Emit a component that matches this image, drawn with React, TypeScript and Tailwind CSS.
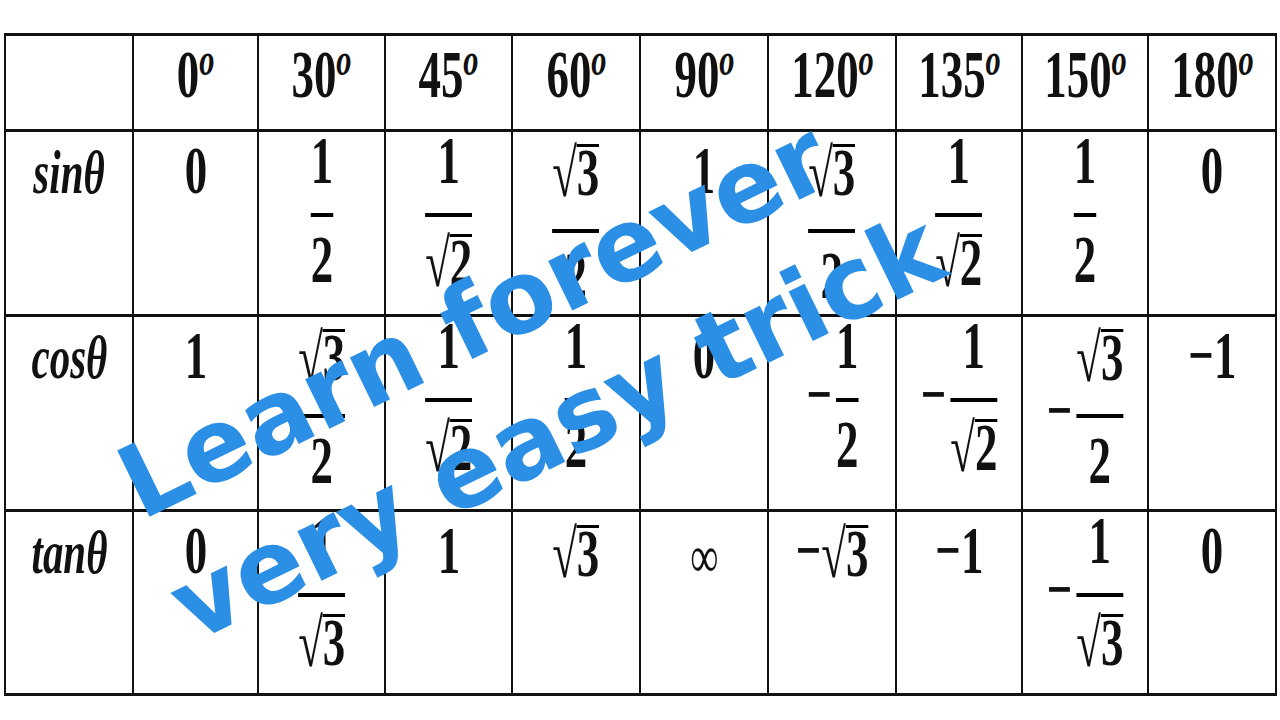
import type { ReactNode } from "react";

const serif = "font-['Liberation_Serif','Times_New_Roman',serif]";

function Rad({ v }: { v: string }) {
  return (
    <span className="flex items-start">
      <span className="relative top-[4px] leading-[50px]">√</span>
      <span className="border-t-[3px] border-black leading-[50px]">{v}</span>
    </span>
  );
}

function Val({ children }: { children: ReactNode }) {
  return <div className="mt-[13px] flex items-start leading-[50px]">{children}</div>;
}

function Minus({ rad }: { rad?: boolean }) {
  return <span className={`mr-[6px] leading-[50px] ${rad ? "mt-[68px]" : "mt-[52px]"}`}>−</span>;
}

interface FracProps {
  n: string;
  d: string;
  nRad?: boolean;
  dRad?: boolean;
  neg?: boolean;
}

function Frac({ n, d, nRad, dRad, neg }: FracProps) {
  return (
    <div className="flex items-start">
      {neg && <Minus rad={nRad} />}
      <div className="flex flex-col items-center pt-[3px]">
        {nRad ? (
          <div className="mb-[4px] mt-[9px]">
            <Rad v={n} />
          </div>
        ) : (
          <span className="block leading-[50px]">{n}</span>
        )}
        <div className="mt-[28px] h-[4px] self-stretch bg-black" />
        <div className="mt-[17px]">
          {dRad ? <Rad v={d} /> : <span className="block leading-[50px]">{d}</span>}
        </div>
      </div>
    </div>
  );
}

function Deg({ v }: { v: string }) {
  return (
    <div className="mt-[13px] flex items-start">
      <span className="leading-[50px]">{v}</span>
      <span className="text-[46px] italic leading-[22px]">o</span>
    </div>
  );
}

function Label({ t }: { t: string }) {
  return <div className="mt-[15px] text-[62px] italic leading-[50px]">{t}θ</div>;
}

function Cell({ children }: { children?: ReactNode }) {
  return (
    <div className="flex justify-center bg-white">
      <div className="flex scale-x-[0.66] items-start">{children}</div>
    </div>
  );
}

const angles = ["0", "30", "45", "60", "90", "120", "135", "150", "180"];

export default function App() {
  return (
    <div className="relative h-[720px] w-[1280px] overflow-hidden bg-white pl-[4px] pt-[33px]">
      <div
        className={`grid w-fit grid-cols-[126px_123px_125px_125px_126px_126px_126px_124px_124px_126px] grid-rows-[93px_182px_192px_181px] gap-x-[2px] gap-y-[3px] bg-[#111] px-[2px] py-[3px] text-[68px] font-bold text-[#111] ${serif}`}
      >
        <Cell />
        {angles.map((a) => (
          <Cell key={a}>
            <Deg v={a} />
          </Cell>
        ))}

        <Cell><Label t="sin" /></Cell>
        <Cell><Val>0</Val></Cell>
        <Cell><Frac n="1" d="2" /></Cell>
        <Cell><Frac n="1" d="2" dRad /></Cell>
        <Cell><Frac n="3" d="2" nRad /></Cell>
        <Cell><Val>1</Val></Cell>
        <Cell><Frac n="3" d="2" nRad /></Cell>
        <Cell><Frac n="1" d="2" dRad /></Cell>
        <Cell><Frac n="1" d="2" /></Cell>
        <Cell><Val>0</Val></Cell>

        <Cell><Label t="cos" /></Cell>
        <Cell><Val>1</Val></Cell>
        <Cell><Frac n="3" d="2" nRad /></Cell>
        <Cell><Frac n="1" d="2" dRad /></Cell>
        <Cell><Frac n="1" d="2" /></Cell>
        <Cell><Val>0</Val></Cell>
        <Cell><Frac n="1" d="2" neg /></Cell>
        <Cell><Frac n="1" d="2" dRad neg /></Cell>
        <Cell><Frac n="3" d="2" nRad neg /></Cell>
        <Cell><Val>−1</Val></Cell>

        <Cell><Label t="tan" /></Cell>
        <Cell><Val>0</Val></Cell>
        <Cell><Frac n="1" d="3" dRad /></Cell>
        <Cell><Val>1</Val></Cell>
        <Cell>
          <div className="mt-[13px]">
            <Rad v="3" />
          </div>
        </Cell>
        <Cell>
          <div className="mt-[20px] text-[60px] font-normal leading-[50px]">∞</div>
        </Cell>
        <Cell>
          <div className="mt-[13px] flex items-start">
            <span className="leading-[50px]">−</span>
            <Rad v="3" />
          </div>
        </Cell>
        <Cell><Val>−1</Val></Cell>
        <Cell><Frac n="1" d="3" dRad neg /></Cell>
        <Cell><Val>0</Val></Cell>
      </div>

      <div className="absolute left-[515px] top-[374px] -translate-x-1/2 -translate-y-1/2 -rotate-[26deg] whitespace-nowrap text-center font-['DejaVu_Sans',sans-serif] text-[101px] font-bold leading-[133px] text-[#2a8fe5]">
        <div className="pr-[27px]">Learn forever</div>
        <div className="pl-[28px]">very easy trick</div>
      </div>
    </div>
  );
}
